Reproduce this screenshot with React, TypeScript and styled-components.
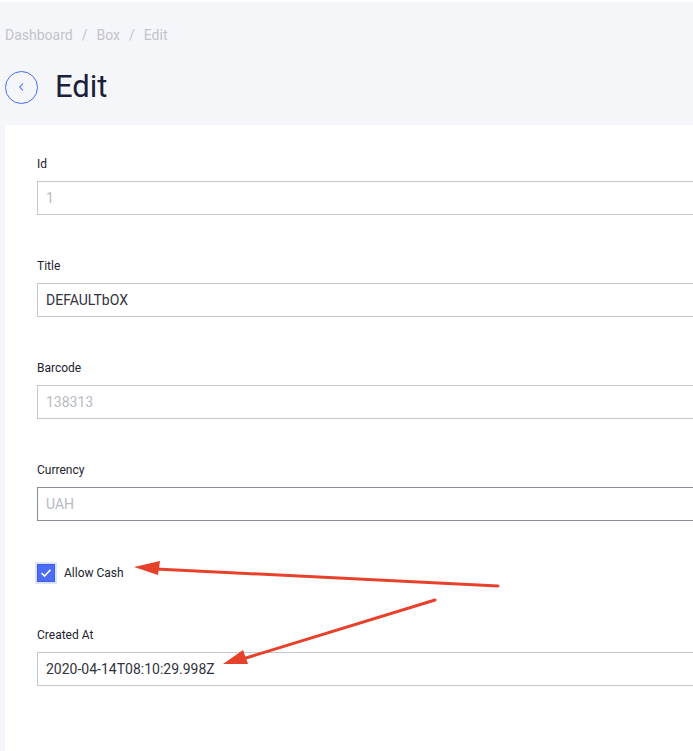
import React from "react";
import styled, { createGlobalStyle } from "styled-components";

const GlobalStyle = createGlobalStyle`
  html, body {
    margin: 0;
    padding: 0;
    background: #f5f6fa;
    font-family: Roboto, "Liberation Sans", Arial, sans-serif;
    overflow: hidden;
  }
`;

type Field = {
  label: string;
  value: string;
  disabled?: boolean;
  dark?: boolean;
};

const fields: Field[] = [
  { label: "Id", value: "1", disabled: true },
  { label: "Title", value: "DEFAULTbOX" },
  { label: "Barcode", value: "138313", disabled: true },
  { label: "Currency", value: "UAH", disabled: true, dark: true },
];

export default function App() {
  return (
    <>
      <GlobalStyle />
      <Page>
        <TopStrip />
        <Header>
          <Breadcrumbs>
            <span>Dashboard</span>
            <Sep>/</Sep>
            <span>Box</span>
            <Sep>/</Sep>
            <span>Edit</span>
          </Breadcrumbs>
          <TitleRow>
            <BackButton aria-label="back">
              <svg width="10" height="10" viewBox="0 0 10 10">
                <path d="M6 1.5 L2.8 5 L6 8.5" fill="none" stroke="#4a6cf7" strokeWidth="1.1" />
              </svg>
            </BackButton>
            <Title>Edit</Title>
          </TitleRow>
        </Header>

        <Card>
          {fields.map((f) => (
            <Group key={f.label}>
              <Label>{f.label}</Label>
              <Input $dark={f.dark} $muted={f.disabled}>{f.value}</Input>
            </Group>
          ))}

          <CheckRow>
            <CheckBox>
              <svg width="12" height="10" viewBox="0 0 12 10">
                <path d="M1.5 5 L4.5 8 L10.5 1.8" fill="none" stroke="#fff" strokeWidth="1.6" />
              </svg>
            </CheckBox>
            <CheckLabel>Allow Cash</CheckLabel>
          </CheckRow>

          <Group>
            <Label>Created At</Label>
            <Input>2020-04-14T08:10:29.998Z</Input>
          </Group>
        </Card>

        <Arrows width="693" height="751" viewBox="0 0 693 751">
          <path d="M498 586 L156 569" stroke="#e8412b" strokeWidth="3" strokeLinecap="round" fill="none" />
          <path d="M134 567 L160 561 L158 575 Z" fill="#e8412b" />
          <path d="M435 600 L246 658" stroke="#e8412b" strokeWidth="3" strokeLinecap="round" fill="none" />
          <path d="M223 664 L243 650 L248 664 Z" fill="#e8412b" />
        </Arrows>
      </Page>
    </>
  );
}

const Page = styled.div`
  position: relative;
  width: 693px;
  height: 751px;
  overflow: hidden;
`;

const TopStrip = styled.div`
  height: 2px;
  background: #ffffff;
`;

const Header = styled.div`
  padding: 0 0 0 5px;
  height: 123px;
  box-sizing: border-box;
`;

const Breadcrumbs = styled.div`
  display: flex;
  gap: 9px;
  padding-top: 24px;
  font-size: 14px;
  line-height: 18px;
  color: #c2c3ca;
`;

const Sep = styled.span`
  color: #c2c3ca;
`;

const TitleRow = styled.div`
  display: flex;
  align-items: center;
  gap: 17px;
  margin-top: 25px;
`;

const BackButton = styled.div`
  width: 31px;
  height: 31px;
  border: 1px solid #4a6cf7;
  border-radius: 50%;
  display: flex;
  align-items: center;
  justify-content: center;
`;

const Title = styled.h1`
  margin: 0;
  font-size: 31px;
  font-weight: 400;
  color: #1d1e3a;
  line-height: 36px;
`;

const Card = styled.div`
  margin-left: 5px;
  width: 760px;
  min-height: 640px;
  background: #ffffff;
  padding: 31px 0 0 32px;
  box-sizing: border-box;
  display: flex;
  flex-direction: column;
`;

const Group = styled.div`
  display: flex;
  flex-direction: column;
  margin-bottom: 43px;
`;

const Label = styled.label`
  font-size: 12px;
  line-height: 16px;
  color: #22232e;
  margin-bottom: 9px;
`;

const Input = styled.div<{ $dark?: boolean; $muted?: boolean }>`
  height: 34px;
  box-sizing: border-box;
  border: 1px solid ${(p) => (p.$dark ? "#8d8d99" : "#c6c6cc")};
  padding: 0 8px;
  display: flex;
  align-items: center;
  font-size: 14px;
  color: ${(p) => (p.$muted ? "#b9bac2" : "#32333c")};
`;

const CheckRow = styled.div`
  display: flex;
  align-items: center;
  gap: 9px;
  margin-bottom: 45px;
`;

const CheckBox = styled.div`
  width: 16px;
  height: 16px;
  background: #4a6cf7;
  border: 1px solid #3f5ee0;
  box-shadow: 0 0 0 2px #dce3fd;
  display: flex;
  align-items: center;
  justify-content: center;
`;

const CheckLabel = styled.span`
  font-size: 12px;
  color: #22232e;
`;

const Arrows = styled.svg`
  position: absolute;
  left: 0;
  top: 0;
  pointer-events: none;
`;
